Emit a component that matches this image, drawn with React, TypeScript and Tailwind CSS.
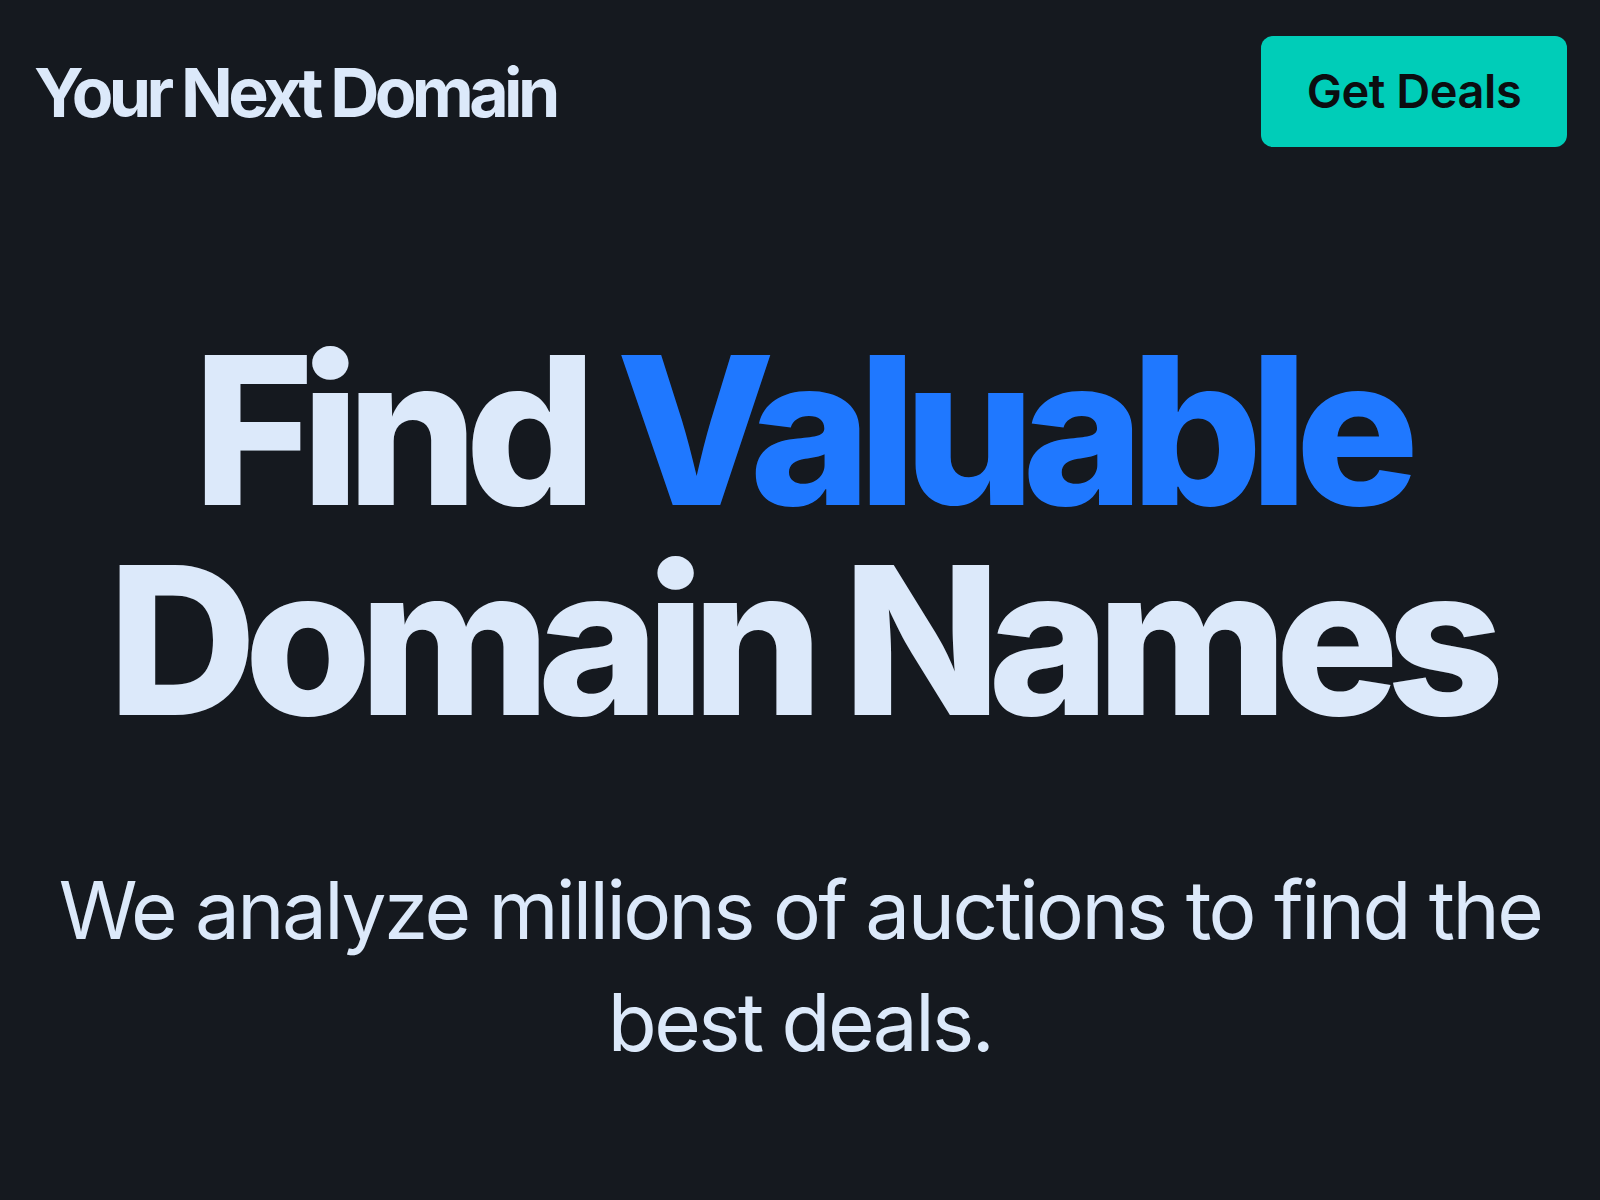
export default function App() {
  return (
    <div className="min-h-[1200px] w-full bg-[#15191f] font-['Inter','Noto_Sans',sans-serif] text-[#dce9fa]">
      <header className="flex items-center justify-between pl-[34px] pr-[33px] pt-[36px]">
        <span className="text-[68px] font-bold leading-none tracking-[-0.068em]">Your Next Domain</span>
        <button className="h-[111px] w-[306px] rounded-[12px] bg-[#00cdb8] text-[47px] font-semibold tracking-[-0.01em] text-[#0b0d10]">
          Get Deals
        </button>
      </header>

      <main className="flex flex-col items-center px-[30px] text-center">
        <h1 className="mt-[178px] text-[206px] font-extrabold leading-[210px] tracking-[-0.061em]">
          Find <span className="text-[#1f78ff]">Valuable</span>
          <br />
          Domain Names
        </h1>
        <p className="mt-[109px] max-w-[1540px] text-[80px] font-normal leading-[112px] tracking-[-0.032em]">
          We analyze millions of auctions to find the best deals.
        </p>
      </main>
    </div>
  );
}
